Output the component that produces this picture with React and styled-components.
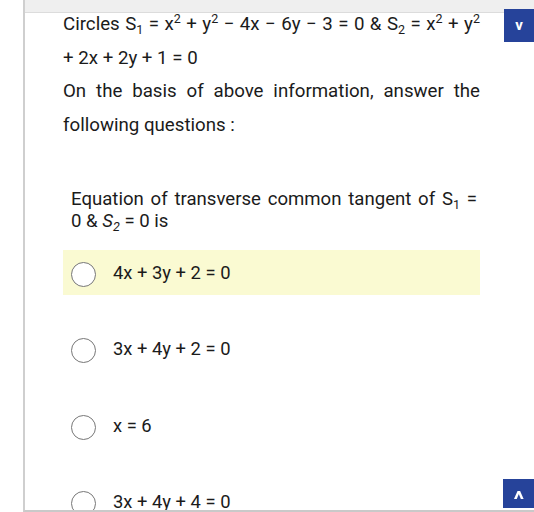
import React from 'react'
import styled, { createGlobalStyle } from 'styled-components'

const GlobalStyle = createGlobalStyle`
  html, body {
    margin: 0;
    padding: 0;
    background: #ffffff;
    overflow: hidden;
  }
  body {
    font-family: Roboto, "Liberation Sans", Arial, sans-serif;
    color: #1b1b1b;
  }
`

const Frame = styled.div`
  box-sizing: border-box;
  height: 512px;
  margin-left: 23px;
  border-left: 2px solid #cfcfcf;
  border-bottom: 2px solid #c9c9c9;
  overflow: hidden;
`

const TopBar = styled.div`
  height: 12px;
  background: #efefef;
  border-bottom: 1px solid #dcdcdc;
`

const Passage = styled.p`
  margin: -5px 0 0 38px;
  width: 417px;
  font-size: 18.7px;
  line-height: 33.7px;
  text-align: justify;
`

const Question = styled.p`
  margin: 45px 0 0 46px;
  width: 406px;
  font-size: 18.6px;
  line-height: 22px;
  text-align: justify;
`

const Sup = styled.sup`
  font-size: 12.5px;
  line-height: 0;
  vertical-align: 7px;
`

const Sub = styled.sub`
  font-size: 12.5px;
  line-height: 0;
  vertical-align: -4px;
`

const Var = styled.span`
  font-style: ${p => (p.$italic ? 'italic' : 'normal')};
`

const Options = styled.ul`
  list-style: none;
  margin: 18px 0 0 38px;
  padding: 0;
  width: 417px;
  display: flex;
  flex-direction: column;
  gap: 31.5px;
`

const Option = styled.li`
  height: 45px;
  display: flex;
  align-items: center;
  gap: 17px;
  padding-left: 8px;
  background: ${p => (p.$marked ? '#fafad2' : 'transparent')};
  font-size: 18.4px;
`

const Radio = styled.span`
  box-sizing: border-box;
  width: 25px;
  height: 25px;
  margin-top: 4px;
  border-radius: 50%;
  border: 1.6px solid #777777;
  background: #ffffff;
  flex: none;
`

const NavButton = styled.button`
  position: fixed;
  right: 0;
  top: ${p => p.$top}px;
  width: ${p => p.$w}px;
  height: ${p => p.$h}px;
  border: none;
  padding: 0;
  background: #26439a;
  color: #ffffff;
  font-family: Roboto, "Liberation Sans", sans-serif;
  font-weight: bold;
  font-size: 15px;
  line-height: 1;
  display: flex;
  align-items: center;
  justify-content: center;
`

const Caret = styled.span`
  display: block;
  font-size: 22px;
  transform: translateY(6px) scaleX(1.1);
`

const S = ({ n, italic }) => (
  <Var $italic={italic}>S<Sub>{n}</Sub></Var>
)

const options = [
  { text: '4x + 3y + 2 = 0', marked: true },
  { text: '3x + 4y + 2 = 0' },
  { text: 'x = 6' },
  { text: '3x + 4y + 4 = 0' },
]

export default function App() {
  return (
    <>
      <GlobalStyle />
      <Frame>
        <TopBar />
        <Passage>
          Circles <S n="1" /> = x<Sup>2</Sup> + y<Sup>2</Sup> − 4x − 6y − 3 = 0 &amp; <S n="2" /> = x<Sup>2</Sup> + y<Sup>2</Sup> +&nbsp;2x + 2y + 1 = 0
          <br />
          On the basis of above information, answer the following questions :
        </Passage>
        <Question>
          Equation of transverse common tangent of <S n="1" /> = 0&nbsp;&amp; <S n="2" italic /> = 0 is
        </Question>
        <Options>
          {options.map(o => (
            <Option key={o.text} $marked={o.marked}>
              <Radio />
              <span>{o.text}</span>
            </Option>
          ))}
        </Options>
      </Frame>
      <NavButton $top={9} $w={30} $h={33}>v</NavButton>
      <NavButton $top={479} $w={31} $h={29}><Caret>^</Caret></NavButton>
    </>
  )
}
